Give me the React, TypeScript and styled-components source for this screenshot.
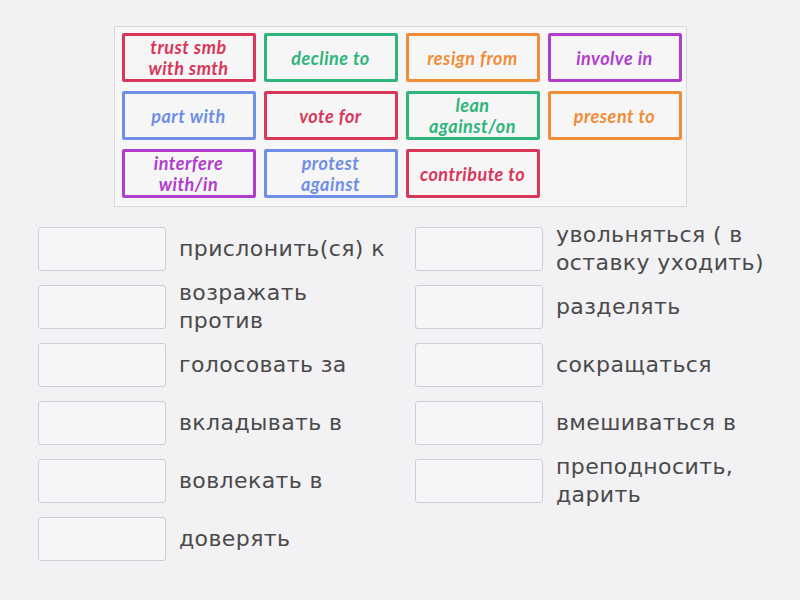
import React from 'react';
import styled, { createGlobalStyle } from 'styled-components';

const GlobalStyle = createGlobalStyle`
  html, body {
    margin: 0;
    padding: 0;
    background: #f2f1f3;
  }
  body {
    font-family: "DejaVu Sans", "Open Sans", sans-serif;
  }
`;

const Page = styled.div`
  width: 800px;
  height: 600px;
  display: flex;
  flex-direction: column;
  align-items: flex-start;
  padding-top: 26px;
  box-sizing: border-box;
  overflow: hidden;
`;

const Bank = styled.div`
  align-self: center;
  width: 573px;
  box-sizing: border-box;
  padding: 6px 7px 8px 7px;
  background: #f6f6f7;
  border: 1px solid #d8d8dc;
  display: grid;
  grid-template-columns: repeat(4, 134px);
  grid-auto-rows: 49px;
  column-gap: 8px;
  row-gap: 9px;
`;

const Tile = styled.div<{ $color: string }>`
  box-sizing: border-box;
  border: 3px solid ${({ $color }) => $color};
  border-radius: 2px;
  color: ${({ $color }) => $color};
  display: flex;
  align-items: center;
  justify-content: center;
  text-align: center;
  font-family: "Lato", "Open Sans", sans-serif;
  font-style: italic;
  font-weight: 700;
  font-size: 18px;
  letter-spacing: 0.5px;
  line-height: 21px;
  padding: 1px 4px 0;
`;

const TileText = styled.span`
  white-space: pre-line;
`;

const Answers = styled.div`
  margin-top: 20px;
  padding-left: 38px;
  display: grid;
  grid-template-columns: 377px 377px;
  grid-auto-rows: 44px;
  row-gap: 14px;
`;

const Row = styled.div`
  display: flex;
  align-items: center;
  gap: 13px;
`;

const Slot = styled.div`
  flex: none;
  width: 128px;
  height: 44px;
  box-sizing: border-box;
  background: #f6f5f7;
  border: 1px solid #cfcfd3;
  border-radius: 3px;
`;

const Clue = styled.div`
  font-family: "DejaVu Sans", "Open Sans", sans-serif;
  font-size: 22px;
  letter-spacing: 0.4px;
  line-height: 28px;
  color: #4a4a4a;
  white-space: pre-line;
  width: 236px;
`;

const RED = '#d8375a';
const GREEN = '#2db57a';
const ORANGE = '#f08d37';
const PURPLE = '#b13dcc';
const BLUE = '#6f8fe6';

const tiles: { text: string; color: string }[] = [
  { text: 'trust smb\nwith smth', color: RED },
  { text: 'decline to', color: GREEN },
  { text: 'resign from', color: ORANGE },
  { text: 'involve in', color: PURPLE },
  { text: 'part with', color: BLUE },
  { text: 'vote for', color: RED },
  { text: 'lean\nagainst/on', color: GREEN },
  { text: 'present to', color: ORANGE },
  { text: 'interfere\nwith/in', color: PURPLE },
  { text: 'protest\nagainst', color: BLUE },
  { text: 'contribute to', color: RED },
];

const clues: [string, string][] = [
  ['прислонить(ся) к', 'увольняться ( в\nоставку уходить)'],
  ['возражать\nпротив', 'разделять'],
  ['голосовать за', 'сокращаться'],
  ['вкладывать в', 'вмешиваться в'],
  ['вовлекать в', 'преподносить,\nдарить'],
  ['доверять', ''],
];

export default function App() {
  return (
    <>
      <GlobalStyle />
      <Page>
        <Bank>
          {tiles.map((t, i) => (
            <Tile key={i} $color={t.color}>
              <TileText>{t.text}</TileText>
            </Tile>
          ))}
        </Bank>
        <Answers>
          {clues.map(([left, right], i) => (
            <React.Fragment key={i}>
              <Row>
                <Slot />
                <Clue>{left}</Clue>
              </Row>
              {right ? (
                <Row>
                  <Slot />
                  <Clue>{right}</Clue>
                </Row>
              ) : (
                <div />
              )}
            </React.Fragment>
          ))}
        </Answers>
      </Page>
    </>
  );
}
